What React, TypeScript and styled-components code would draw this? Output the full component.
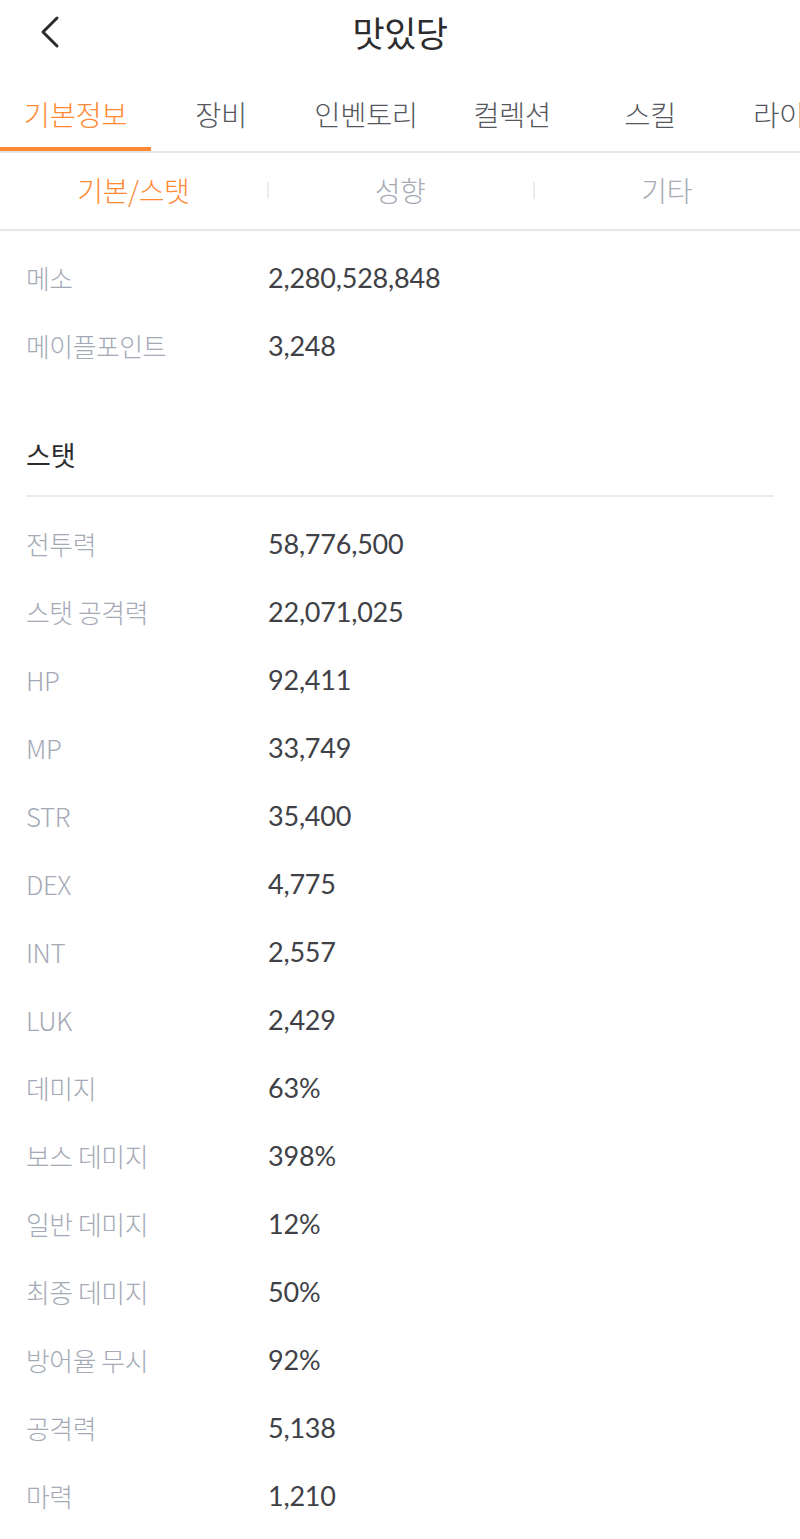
import React from "react";
import styled, { createGlobalStyle } from "styled-components";

const Global = createGlobalStyle`
  html, body { margin: 0; padding: 0; background: #fff; }
  body { font-family: Lato, "Noto Sans CJK KR", sans-serif; -webkit-font-smoothing: antialiased; }
`;

const Page = styled.div`
  width: 800px;
  background: #fff;
`;

const Header = styled.header`
  height: 66px;
  display: flex;
  align-items: center;
  justify-content: center;
  position: relative;
`;

const BackButton = styled.button`
  position: absolute;
  left: 30px;
  top: 10px;
  width: 40px;
  height: 44px;
  border: 0;
  background: none;
  padding: 0;
  display: flex;
  align-items: center;
  justify-content: center;
`;

const Title = styled.h1`
  margin: 0 0 4px;
  font-family: "Noto Sans CJK KR", sans-serif;
  font-weight: 400;
  font-size: 35px;
  color: #2c2c2e;
  letter-spacing: -0.5px;
`;

const TabBar = styled.nav`
  display: flex;
  height: 87px;
  border-bottom: 2px solid #e6e6e6;
  box-sizing: border-box;
  overflow: hidden;
  white-space: nowrap;
`;

const Tab = styled.div<{ $active?: boolean; $w: number }>`
  position: relative;
  flex: 0 0 ${(p) => p.$w}px;
  display: flex;
  justify-content: center;
  padding-top: 27px;
  line-height: 42px;
  font-family: "Noto Sans CJK KR", sans-serif;
  font-size: 28.5px;
  font-weight: 300;
  letter-spacing: -0.4px;
  color: ${(p) => (p.$active ? "#ff8a33" : "#55575c")};
  &::after {
    content: "";
    display: ${(p) => (p.$active ? "block" : "none")};
    position: absolute;
    left: 0;
    right: 0;
    bottom: -2px;
    height: 6px;
    background: #ff8a33;
  }
`;

const SubBar = styled.div`
  display: grid;
  grid-template-columns: 1fr 1fr 1fr;
  height: 78px;
  border-bottom: 2px solid #e6e6e6;
  box-sizing: border-box;
`;

const SubTab = styled.div<{ $active?: boolean; $divider?: boolean }>`
  position: relative;
  display: flex;
  align-items: center;
  justify-content: center;
  padding-bottom: 2px;
  font-family: "Noto Sans CJK KR", sans-serif;
  font-size: 28px;
  font-weight: 300;
  letter-spacing: -0.4px;
  color: ${(p) => (p.$active ? "#ff8a33" : "#a6abb6")};
  &::before {
    content: "";
    display: ${(p) => (p.$divider ? "block" : "none")};
    position: absolute;
    left: 0;
    top: 29px;
    width: 2px;
    height: 17px;
    background: #ececec;
  }
`;

const Content = styled.section`
  padding: 12px 26px 0;
`;

const Row = styled.div`
  display: flex;
  align-items: center;
  height: 68px;
`;

const Label = styled.div`
  width: 242px;
  font-family: "Noto Sans CJK KR", sans-serif;
  font-size: 25.8px;
  font-weight: 300;
  color: #a4a9b6;
  letter-spacing: -0.4px;
`;

const Value = styled.div`
  font-family: Lato, "Noto Sans CJK KR", sans-serif;
  font-size: 27px;
  color: #404146;
  letter-spacing: -0.2px;
`;

const SectionHead = styled.h2`
  margin: 58px 0 12px;
  padding-bottom: 22px;
  border-bottom: 2px solid #ececec;
  line-height: 36px;
  font-family: "Noto Sans CJK KR", sans-serif;
  font-weight: 400;
  font-size: 27px;
  color: #2c2c2e;
`;

const tabs = [
  { t: "기본정보", w: 151, active: true },
  { t: "장비", w: 140 },
  { t: "인벤토리", w: 150 },
  { t: "컬렉션", w: 142 },
  { t: "스킬", w: 134 },
  { t: "라이브", w: 150 },
];

const basic = [
  ["메소", "2,280,528,848"],
  ["메이플포인트", "3,248"],
];

const stats = [
  ["전투력", "58,776,500"],
  ["스탯 공격력", "22,071,025"],
  ["HP", "92,411"],
  ["MP", "33,749"],
  ["STR", "35,400"],
  ["DEX", "4,775"],
  ["INT", "2,557"],
  ["LUK", "2,429"],
  ["데미지", "63%"],
  ["보스 데미지", "398%"],
  ["일반 데미지", "12%"],
  ["최종 데미지", "50%"],
  ["방어율 무시", "92%"],
  ["공격력", "5,138"],
  ["마력", "1,210"],
];

export default function App() {
  return (
    <Page>
      <Global />
      <Header>
        <BackButton aria-label="back">
          <svg width="24" height="34" viewBox="0 0 24 34" fill="none">
            <path d="M19 3 L5 17 L19 31" stroke="#2c2c2e" strokeWidth="3" strokeLinecap="round" strokeLinejoin="round" />
          </svg>
        </BackButton>
        <Title>맛있당</Title>
      </Header>
      <TabBar>
        {tabs.map((x) => (
          <Tab key={x.t} $w={x.w} $active={x.active}>
            {x.t}
          </Tab>
        ))}
      </TabBar>
      <SubBar>
        <SubTab $active>기본/스탯</SubTab>
        <SubTab $divider>성향</SubTab>
        <SubTab $divider>기타</SubTab>
      </SubBar>
      <Content>
        {basic.map(([l, v]) => (
          <Row key={l}>
            <Label>{l}</Label>
            <Value>{v}</Value>
          </Row>
        ))}
        <SectionHead>스탯</SectionHead>
        {stats.map(([l, v]) => (
          <Row key={l}>
            <Label>{l}</Label>
            <Value>{v}</Value>
          </Row>
        ))}
      </Content>
    </Page>
  );
}
